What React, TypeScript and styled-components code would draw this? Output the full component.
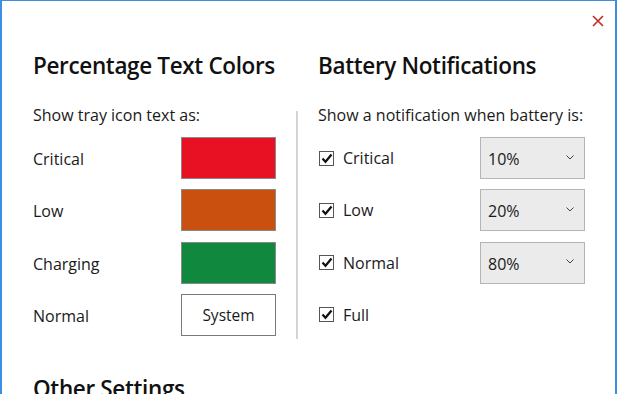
import React from "react";
import styled, { createGlobalStyle } from "styled-components";

const Global = createGlobalStyle`
  html, body { margin: 0; padding: 0; background: #ffffff; overflow: hidden; }
  body { width: 618px; height: 394px; font-family: "Open Sans", "Noto Sans", sans-serif; color: #111; }
`;

const Window = styled.div`
  box-sizing: border-box;
  width: 617px;
  height: 394px;
  overflow: hidden;
  border-top: 1px solid #3d8ee0;
  border-left: 2px solid #3d8ee0;
  border-right: 2px solid #3d8ee0;
  background: #fff;
  position: relative;
  padding: 49px 0 0 31px;
`;

const CloseButton = styled.button`
  position: absolute;
  top: 11px;
  right: 8px;
  width: 18px;
  height: 18px;
  padding: 0;
  border: none;
  background: transparent;
  display: flex;
  align-items: center;
  justify-content: center;
`;

const Columns = styled.div`
  display: grid;
  grid-template-columns: 243px 2px 267px;
  column-gap: 20px;
`;

const Column = styled.section`
  display: flex;
  flex-direction: column;
`;

const Divider = styled.div`
  background: #d4d4d4;
  margin-top: 61px;
  height: 228px;
`;

const Heading = styled.h2`
  margin: 0;
  font-size: 22.5px;
  line-height: 32px;
  font-weight: 600;
  letter-spacing: -0.35px;
  white-space: nowrap;
  color: #111;
`;

const Subtitle = styled.div`
  margin-top: 22px;
  font-size: 16px;
  line-height: 22px;
  white-space: nowrap;
  color: #1a1a1a;
`;

const Rows = styled.div`
  margin-top: 11px;
  display: flex;
  flex-direction: column;
  gap: 10.33px;
`;

const Row = styled.div`
  height: 42px;
  display: flex;
  align-items: center;
  justify-content: space-between;
`;

const Label = styled.span`
  font-size: 16px;
  color: #1a1a1a;
  padding-top: 2px;
`;

const Swatch = styled.div<{ $color?: string }>`
  box-sizing: border-box;
  width: 95px;
  height: 42px;
  background: ${(p) => p.$color ?? "#fff"};
  border: 1px solid ${(p) => (p.$color ? "#8a8a8a" : "#7a7a7a")};
  display: flex;
  align-items: center;
  justify-content: center;
  font-size: 15.5px;
  color: #1a1a1a;
`;

const CheckLabel = styled.label`
  display: flex;
  align-items: center;
  gap: 9px;
  font-size: 16px;
  color: #1a1a1a;
`;

const Box = styled.span`
  box-sizing: border-box;
  width: 15px;
  height: 15px;
  border: 1px solid #555;
  background: #fff;
  display: flex;
  align-items: center;
  justify-content: center;
  margin-left: 1px;
`;

const Select = styled.div`
  box-sizing: border-box;
  width: 105px;
  height: 42px;
  background: #ebebeb;
  border: 1px solid #b4b4b4;
  display: flex;
  align-items: center;
  justify-content: space-between;
  padding: 2px 10px 0 7px;
  font-size: 16px;
  color: #1a1a1a;
`;

const BottomHeading = styled(Heading)`
  margin-top: 34px;
`;

const Check = () => (
  <Box>
    <svg width="12" height="11" viewBox="0 0 12 11">
      <polyline points="1.5,5.5 4.5,8.8 10.5,1.5" fill="none" stroke="#111" strokeWidth="2.2" />
    </svg>
  </Box>
);

const Chevron = () => (
  <svg width="8" height="5" viewBox="0 0 8 5" style={{ marginTop: -4 }}>
    <polyline points="0.5,0.5 4,4 7.5,0.5" fill="none" stroke="#444" strokeWidth="1" />
  </svg>
);

const colorRows: { label: string; color?: string }[] = [
  { label: "Critical", color: "#e81123" },
  { label: "Low", color: "#ca5010" },
  { label: "Charging", color: "#10893e" },
  { label: "Normal" },
];

const notifyRows: { label: string; value?: string }[] = [
  { label: "Critical", value: "10%" },
  { label: "Low", value: "20%" },
  { label: "Normal", value: "80%" },
  { label: "Full" },
];

export default function App() {
  return (
    <>
      <Global />
      <Window>
        <CloseButton aria-label="Close">
          <svg width="12" height="12" viewBox="0 0 12 12">
            <path d="M1 1 L11 11 M11 1 L1 11" stroke="#c42b1c" strokeWidth="1.6" />
          </svg>
        </CloseButton>
        <Columns>
          <Column>
            <Heading>Percentage Text Colors</Heading>
            <Subtitle>Show tray icon text as:</Subtitle>
            <Rows>
              {colorRows.map((r) => (
                <Row key={r.label}>
                  <Label>{r.label}</Label>
                  <Swatch $color={r.color}>{r.color ? null : "System"}</Swatch>
                </Row>
              ))}
            </Rows>
          </Column>
          <Divider />
          <Column>
            <Heading>Battery Notifications</Heading>
            <Subtitle>Show a notification when battery is:</Subtitle>
            <Rows>
              {notifyRows.map((r) => (
                <Row key={r.label}>
                  <CheckLabel>
                    <Check />
                    {r.label}
                  </CheckLabel>
                  {r.value ? (
                    <Select>
                      {r.value}
                      <Chevron />
                    </Select>
                  ) : null}
                </Row>
              ))}
            </Rows>
          </Column>
        </Columns>
        <BottomHeading>Other Settings</BottomHeading>
      </Window>
    </>
  );
}
